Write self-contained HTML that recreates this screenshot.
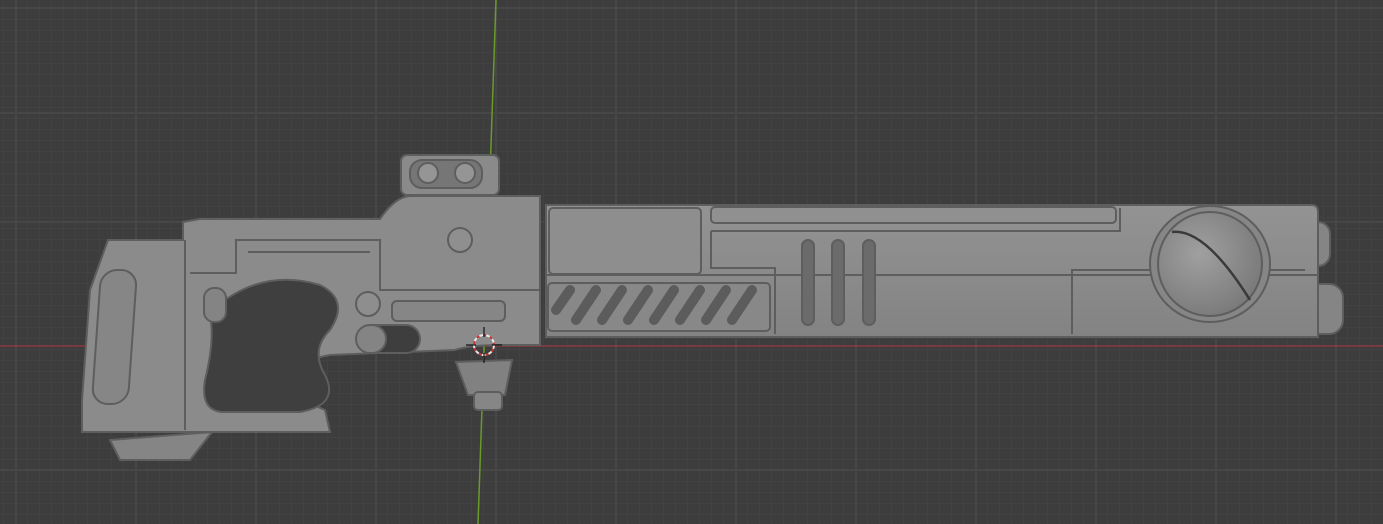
<!DOCTYPE html>
<html><head><meta charset="utf-8"><style>
html,body{margin:0;padding:0}
body{width:1383px;height:524px;overflow:hidden;background:#3d3d3d;position:relative}
.g{position:absolute;inset:0;
background-image:
linear-gradient(to right,#474747 0 2px,transparent 2px),
linear-gradient(to right,#424242 0 1px,transparent 1px),
linear-gradient(to bottom,#424242 0 1px,transparent 1px);
background-size:120px 100%,12px 100%,100% 11px;
background-position:15px 0,3px 0,0 8px;}
</style></head><body>
<div class="g"></div>
<svg width="1383" height="524" style="position:absolute;left:0;top:0">
<g stroke="#474747" stroke-width="2">
<line x1="0" y1="8" x2="1383" y2="8"/><line x1="0" y1="113" x2="1383" y2="113"/>
<line x1="0" y1="222" x2="1383" y2="222"/><line x1="0" y1="470" x2="1383" y2="470"/>
</g>
<line x1="0" y1="346" x2="1383" y2="346" stroke="#8a3a42" stroke-width="1.5"/>
<line x1="496" y1="0" x2="478" y2="524" stroke="#6a9a2a" stroke-width="1.5"/>
<defs>
<linearGradient id="bar" x1="0" y1="0" x2="0" y2="1"><stop offset="0" stop-color="#939393"/><stop offset="1" stop-color="#838383"/></linearGradient>
<radialGradient id="ball" cx="0.4" cy="0.4" r="0.7"><stop offset="0" stop-color="#a0a0a0"/><stop offset="1" stop-color="#767676"/></radialGradient>
</defs>
<g stroke="#5e5e5e" stroke-width="2">
<rect x="1300" y="222" width="30" height="44" rx="12" fill="#858585"/>
<rect x="1305" y="284" width="38" height="50" rx="14" fill="#858585"/>
<path d="M546 205 H1312 Q1318 205 1318 212 V337 H546 Z" fill="url(#bar)"/>
<path d="M546 275 H1318" fill="none"/>
<rect x="549" y="208" width="152" height="66" rx="4" fill="#8e8e8e"/>
<rect x="711" y="207" width="405" height="16" rx="4" fill="#909090"/>
<path d="M711 231 H1120 V208" fill="none"/>
<path d="M711 231 V268 H775 V334" fill="none"/>
<rect x="548" y="283" width="222" height="48" rx="4" fill="#888"/>
<path d="M1072 334 V270 H1305" fill="none"/>
<ellipse cx="1210" cy="264" rx="60" ry="58" fill="#868686"/>
<ellipse cx="1210" cy="264" rx="52" ry="52" fill="url(#ball)"/>
<path d="M1172 232 Q1205 228 1250 300" fill="none" stroke="#3a3a3a" stroke-width="2.5"/>
<rect x="802" y="240" width="12" height="85" rx="6" fill="#6b6b6b"/>
<rect x="832" y="240" width="12" height="85" rx="6" fill="#6b6b6b"/>
<rect x="863" y="240" width="12" height="85" rx="6" fill="#6b6b6b"/>
</g>
<path d="M556 310 L570 290 M576 320 L596 290 M602 320 L622 290 M628 320 L648 290 M654 320 L674 290 M680 320 L700 290 M706 320 L726 290 M732 320 L752 290" stroke="#5c5c5c" stroke-width="10" stroke-linecap="round"/>
<g stroke="#5e5e5e" stroke-width="2">
<rect x="401" y="155" width="98" height="40" rx="6" fill="#8a8a8a"/>
<rect x="410" y="160" width="72" height="28" rx="12" fill="#767676"/>
<circle cx="428" cy="173" r="10" fill="#959595"/>
<circle cx="465" cy="173" r="10" fill="#959595"/>
</g>
<g stroke="#5e5e5e" stroke-width="2">
<path d="M110 440 L120 460 H190 L212 432 Z" fill="#858585"/>
<path d="M108 240 H183 V222 L200 219 H380 Q395 197 410 196 H540 V345 H500 Q470 345 455 350 L330 355 Q300 360 285 380 Q300 400 325 410 L330 432 H82 V400 L90 290 Z" fill="#8b8b8b"/>
<path d="M185 240 V430" fill="none"/>
<path d="M190 273 H236 V240 H380 V290 H540" fill="none"/>
<path d="M248 252 H370" fill="none"/>
<path d="M228 298 Q270 270 320 285 Q350 300 330 330 Q310 350 325 375 Q340 405 300 412 H222 Q200 410 205 380 Q215 340 210 315 Q212 300 228 298 Z" fill="#3f3f3f"/>
<rect x="100" y="270" width="36" height="134" rx="16" fill="#868686" transform="skewX(-4) translate(20 0)"/>
<rect x="204" y="288" width="22" height="34" rx="10" fill="#848484"/>
<circle cx="368" cy="304" r="12" fill="#8e8e8e"/>
<rect x="392" y="301" width="113" height="20" rx="5" fill="#868686"/>
<rect x="358" y="325" width="62" height="28" rx="14" fill="#3e3e3e"/>
<rect x="356" y="325" width="30" height="28" rx="14" fill="#848484"/>
<circle cx="460" cy="240" r="12" fill="#8f8f8f"/>
<path d="M456 362 L468 395 H505 L512 360 Z" fill="#818181"/>
<rect x="474" y="392" width="28" height="18" rx="4" fill="#868686"/>
</g>
<circle cx="484" cy="345" r="10" fill="none" stroke="#e8e8e8" stroke-width="2" stroke-dasharray="4 3"/>
<circle cx="484" cy="345" r="10" fill="none" stroke="#c33" stroke-width="2" stroke-dasharray="3 4" stroke-dashoffset="3"/>
<g stroke="#111" stroke-width="1.2"><line x1="466" y1="345" x2="476" y2="345"/><line x1="492" y1="345" x2="502" y2="345"/><line x1="484" y1="327" x2="484" y2="337"/><line x1="484" y1="353" x2="484" y2="363"/></g>
</svg>
</body></html>
